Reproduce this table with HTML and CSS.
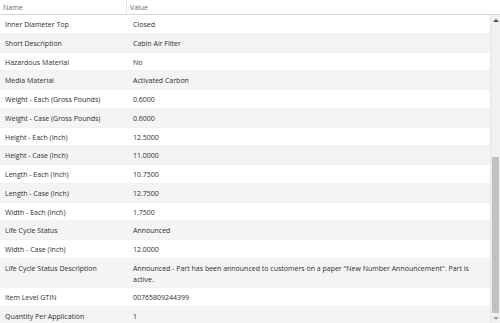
FILE: index.html
```html
<!DOCTYPE html>
<html>
<head>
<meta charset="utf-8">
<link rel="stylesheet" href="styles.css">
</head>
<body>
<div class="grid">
  <div class="head">
    <div class="hcell hname">Name</div>
    <div class="hcell hvalue">Value</div>
  </div>
  <div class="main">
    <div class="rows">
      <div class="row"><div class="c n">Inner Diameter Top</div><div class="c v">Closed</div></div>
      <div class="row alt"><div class="c n">Short Description</div><div class="c v">Cabin Air Filter</div></div>
      <div class="row"><div class="c n">Hazardous Material</div><div class="c v">No</div></div>
      <div class="row alt"><div class="c n">Media Material</div><div class="c v">Activated Carbon</div></div>
      <div class="row"><div class="c n">Weight - Each (Gross Pounds)</div><div class="c v">0.6000</div></div>
      <div class="row alt"><div class="c n">Weight - Case (Gross Pounds)</div><div class="c v">0.6000</div></div>
      <div class="row"><div class="c n">Height - Each (Inch)</div><div class="c v">12.5000</div></div>
      <div class="row alt"><div class="c n">Height - Case (Inch)</div><div class="c v">11.0000</div></div>
      <div class="row"><div class="c n">Length - Each (Inch)</div><div class="c v">10.7500</div></div>
      <div class="row alt"><div class="c n">Length - Case (Inch)</div><div class="c v">12.7500</div></div>
      <div class="row"><div class="c n">Width - Each (Inch)</div><div class="c v">1.7500</div></div>
      <div class="row alt"><div class="c n">Life Cycle Status</div><div class="c v">Announced</div></div>
      <div class="row"><div class="c n">Width - Case (Inch)</div><div class="c v">12.0000</div></div>
      <div class="row alt"><div class="c n">Life Cycle Status Description</div><div class="c v">Announced - Part has been announced to customers on a paper "New Number Announcement". Part is active.</div></div>
      <div class="row"><div class="c n">Item Level GTIN</div><div class="c v">00765809244399</div></div>
      <div class="row alt"><div class="c n">Quantity Per Application</div><div class="c v">1</div></div>
    </div>
    <div class="scrollbar">
      <div class="sbtn"><span class="arrow up"></span></div>
      <div class="track"><div class="thumb"></div></div>
      <div class="sbtn"><span class="arrow down"></span></div>
    </div>
  </div>
</div>
</body>
</html>
```
FILE: styles.css
```css
html, body {
  margin: 0;
  padding: 0;
  background: #ffffff;
  overflow: hidden;
}
body {
  font-family: "Open Sans", "Liberation Sans", sans-serif;
  font-size: 7px;
  color: #2e2e2e;
  width: 500px;
  height: 323px;
}
.grid {
  display: flex;
  flex-direction: column;
  height: 323px;
}
.head {
  display: grid;
  grid-template-columns: 127px 1fr;
  height: 14px;
  border-bottom: 1px solid #d6d6d6;
  flex: none;
}
.hcell {
  color: #6a6a6a;
  line-height: 14px;
  padding-top: 1px;
  box-sizing: border-box;
}
.hname {
  padding-left: 3px;
  border-right: 1px solid #e6e6e6;
}
.hvalue {
  padding-left: 3px;
}
.main {
  display: flex;
  flex: 1;
  min-height: 0;
  overflow: hidden;
}
.rows {
  flex: 1;
  min-width: 0;
}
.row {
  display: grid;
  grid-template-columns: 127px 1fr;
  background: #ffffff;
  border-bottom: 1px solid #f0f0f0;
}
.row.alt {
  background: #f4f4f4;
}
.c {
  padding: 5px 0 2px 0;
  line-height: 10.77px;
}
.n {
  padding-left: 5px;
}
.v {
  padding-left: 6px;
  padding-right: 14px;
}
.scrollbar {
  width: 9px;
  flex: none;
  display: flex;
  flex-direction: column;
  background: #f1f1f1;
  border-left: 1px solid #e4e4e4;
}
.sbtn {
  height: 10px;
  display: flex;
  align-items: center;
  justify-content: center;
  flex: none;
}
.arrow {
  width: 0;
  height: 0;
  border-left: 3px solid transparent;
  border-right: 3px solid transparent;
}
.arrow.up {
  border-bottom: 3px solid #505050;
}
.arrow.down {
  border-top: 3px solid #a3a3a3;
}
.track {
  flex: 1;
  display: flex;
  flex-direction: column;
  justify-content: flex-end;
}
.thumb {
  height: 156px;
  margin: 0 1px 0 1px;
  background: #c1c1c1;
}
```
